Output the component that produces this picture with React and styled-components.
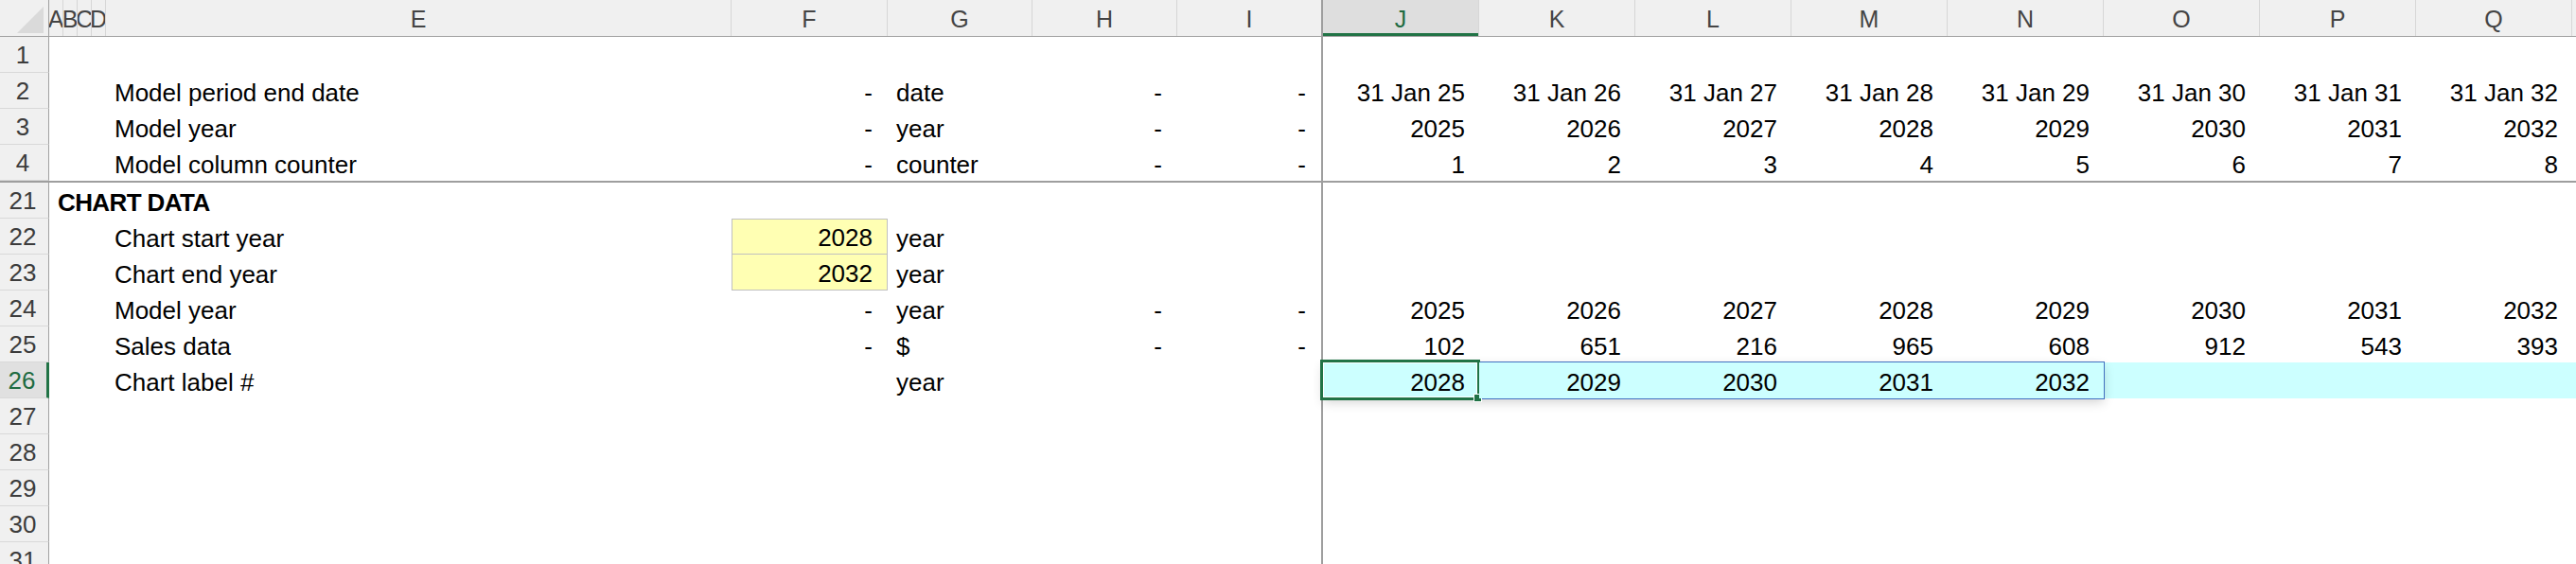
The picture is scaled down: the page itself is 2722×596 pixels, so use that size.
import React from "react";
import styled, { createGlobalStyle } from "styled-components";

const GREEN = "#217346";
const CYAN = "#ccffff";
const YELLOW = "#ffffb3";
const FREEZE = "#9e9e9e";

const GlobalStyle = createGlobalStyle`
  html, body {
    margin: 0;
    padding: 0;
    background: #fff;
    overflow: hidden;
  }
  body {
    font-family: "Liberation Sans", Arial, sans-serif;
  }
`;

const TIME_COLS = ["J", "K", "L", "M", "N", "O", "P", "Q", "R"];

const COLUMNS = [
  { key: "A", width: 15 },
  { key: "B", width: 15 },
  { key: "C", width: 15 },
  { key: "D", width: 15 },
  { key: "E", width: 661 },
  { key: "F", width: 165 },
  { key: "G", width: 153 },
  { key: "H", width: 153 },
  { key: "I", width: 154, frozen: true },
  ...TIME_COLS.map((key) => ({ key, width: 165 })),
];

const YEARS = [2025, 2026, 2027, 2028, 2029, 2030, 2031, 2032];
const DATES = YEARS.map((y) => `31 Jan ${String(y).slice(2)}`);
const COUNTER = [1, 2, 3, 4, 5, 6, 7, 8];
const SALES = [102, 651, 216, 965, 608, 912, 543, 393];

const DASH = { text: "-", align: "right", dash: true };

const series = (values) =>
  Object.fromEntries(values.map((v, i) => [TIME_COLS[i], v]));

const TOP_ROWS = [
  { n: 1 },
  {
    n: 2,
    cells: { E: "Model period end date", F: DASH, G: "date", H: DASH, I: DASH, ...series(DATES.map((d) => ({ text: d, align: "right" }))) },
  },
  {
    n: 3,
    cells: { E: "Model year", F: DASH, G: "year", H: DASH, I: DASH, ...series(YEARS) },
  },
  {
    n: 4,
    cells: { E: "Model column counter", F: DASH, G: "counter", H: DASH, I: DASH, ...series(COUNTER) },
  },
];

const BOTTOM_ROWS = [
  { n: 21, cells: { A: { text: "CHART DATA", bold: true } } },
  { n: 22, cells: { E: "Chart start year", F: { text: "2028", align: "right", input: true }, G: "year" } },
  { n: 23, cells: { E: "Chart end year", F: { text: "2032", align: "right", input: true, noTop: true }, G: "year" } },
  {
    n: 24,
    cells: { E: "Model year", F: DASH, G: "year", H: DASH, I: DASH, ...series(YEARS) },
  },
  {
    n: 25,
    cells: { E: "Sales data", F: DASH, G: "$", H: DASH, I: DASH, ...series(SALES) },
  },
  {
    n: 26,
    selected: true,
    fill: TIME_COLS,
    range: ["J", "N"],
    active: "J",
    cells: { E: "Chart label #", G: "year", ...series([2028, 2029, 2030, 2031, 2032]) },
  },
  { n: 27 },
  { n: 28 },
  { n: 29 },
  { n: 30 },
  { n: 31 },
];

const normalize = (v) => {
  if (v === undefined || v === null) return null;
  if (typeof v === "number") return { text: String(v), align: "right" };
  if (typeof v === "string") return { text: v };
  return v;
};

const Sheet = () => (
  <>
    <GlobalStyle />
    <Grid>
      <HeaderRow>
        <Corner>
          <svg width="30" height="30" viewBox="0 0 30 30">
            <polygon points="29,1 29,29 1,29" fill="#dadada" />
          </svg>
        </Corner>
        {COLUMNS.map((col) => (
          <ColHeader
            key={col.key}
            $w={col.width}
            $frozen={col.frozen}
            $active={col.key === "J"}
          >
            {col.key}
          </ColHeader>
        ))}
      </HeaderRow>

      {TOP_ROWS.map((row) => (
        <SheetRow key={row.n} row={row} />
      ))}
      <FreezeLine />
      {BOTTOM_ROWS.map((row) => (
        <SheetRow key={row.n} row={row} />
      ))}
    </Grid>
  </>
);

const SheetRow = ({ row }) => {
  const renderCell = (col) => {
    const v = normalize(row.cells?.[col.key]);
    const fill = row.fill?.includes(col.key) ? CYAN : v?.input ? YELLOW : null;
    return (
      <Cell
        key={col.key}
        $w={col.width}
        $frozen={col.frozen}
        $align={v?.align}
        $bold={v?.bold}
        $dash={v?.dash}
        $fill={fill}
        $input={v?.input}
        $noTop={v?.noTop}
      >
        {v?.text}
        {row.active === col.key && (
          <ActiveMark>
            <FillHandle />
          </ActiveMark>
        )}
      </Cell>
    );
  };

  let body;
  if (row.range) {
    const from = COLUMNS.findIndex((c) => c.key === row.range[0]);
    const to = COLUMNS.findIndex((c) => c.key === row.range[1]);
    body = (
      <>
        {COLUMNS.slice(0, from).map(renderCell)}
        <RangeGroup>{COLUMNS.slice(from, to + 1).map(renderCell)}</RangeGroup>
        {COLUMNS.slice(to + 1).map(renderCell)}
      </>
    );
  } else {
    body = COLUMNS.map(renderCell);
  }

  return (
    <Row>
      <RowHeader $active={row.selected}>{row.n}</RowHeader>
      {body}
    </Row>
  );
};

//STYLED COMPONENTS

const Grid = styled.div`
  display: flex;
  flex-direction: column;
  width: 2722px;
  height: 596px;
  overflow: hidden;
  background: #fff;
`;

const HeaderRow = styled.div`
  display: flex;
  flex: 0 0 39px;
  background: #f0f0f0;
  border-bottom: 1px solid #a0a0a0;
  box-sizing: border-box;
`;

const Corner = styled.div`
  flex: 0 0 52px;
  box-sizing: border-box;
  border-right: 1px solid #a0a0a0;
  display: flex;
  align-items: flex-end;
  justify-content: flex-end;
  padding: 0 4px 2px 0;
`;

const ColHeader = styled.div`
  flex: 0 0 ${(p) => p.$w}px;
  min-width: 0;
  box-sizing: border-box;
  display: flex;
  align-items: center;
  justify-content: center;
  overflow: hidden;
  padding-top: 3px;
  font-size: 25px;
  color: ${(p) => (p.$active ? "#1e6b41" : "#444")};
  background: ${(p) => (p.$active ? "#dedede" : "transparent")};
  border-right: ${(p) => (p.$frozen ? `2px solid ${FREEZE}` : "1px solid #d6d6d6")};
  box-shadow: ${(p) => (p.$active ? `inset 0 -3px 0 ${GREEN}` : "none")};
`;

const Row = styled.div`
  display: flex;
  flex: 0 0 38px;
  height: 38px;
`;

const RowHeader = styled.div`
  flex: 0 0 52px;
  box-sizing: border-box;
  display: flex;
  align-items: flex-end;
  justify-content: center;
  padding: 0 3px 5px 0;
  font-size: 26px;
  line-height: 1;
  color: ${(p) => (p.$active ? "#1e6b41" : "#3c3c3c")};
  background: ${(p) => (p.$active ? "#e0e0e0" : "#f0f0f0")};
  border-bottom: 1px solid #d8d8d8;
  border-right: ${(p) => (p.$active ? `3px solid ${GREEN}` : "1px solid #a0a0a0")};
`;

const FreezeLine = styled.div`
  flex: 0 0 2px;
  background: ${FREEZE};
`;

const Cell = styled.div`
  flex: 0 0 ${(p) => p.$w}px;
  min-width: 0;
  box-sizing: border-box;
  position: relative;
  display: flex;
  align-items: flex-end;
  justify-content: ${(p) => (p.$align === "right" ? "flex-end" : "flex-start")};
  padding-bottom: 4px;
  padding-left: ${(p) => (p.$align === "right" ? 0 : 9)}px;
  padding-right: ${(p) => (p.$align !== "right" ? 0 : p.$dash ? 16 : 15)}px;
  white-space: nowrap;
  font-size: 26px;
  line-height: 1;
  font-weight: ${(p) => (p.$bold ? 700 : 400)};
  letter-spacing: ${(p) => (p.$bold ? "-0.6px" : "normal")};
  color: #000;
  background: ${(p) => p.$fill || "transparent"};
  border: ${(p) => (p.$input ? "1px solid #c0c0c0" : "none")};
  border-top: ${(p) => (p.$input && !p.$noTop ? "1px solid #c0c0c0" : "none")};
  border-right: ${(p) =>
    p.$frozen ? `2px solid ${FREEZE}` : p.$input ? "1px solid #c0c0c0" : "none"};
`;

const RangeGroup = styled.div`
  display: flex;
  position: relative;
  z-index: 2;
  box-shadow: 0 0 0 1px #4270c0, 0 4px 12px rgba(0, 0, 0, 0.18);
`;

const ActiveMark = styled.span`
  position: absolute;
  inset: -3px -1px -2px -3px;
  border: 3px solid ${GREEN};
  box-shadow: inset 0 0 0 1px #fff;
  pointer-events: none;
`;

const FillHandle = styled.span`
  position: absolute;
  right: -5px;
  bottom: -5px;
  width: 9px;
  height: 9px;
  box-sizing: border-box;
  background: ${GREEN};
  border: 1px solid #fff;
`;

export default Sheet;
